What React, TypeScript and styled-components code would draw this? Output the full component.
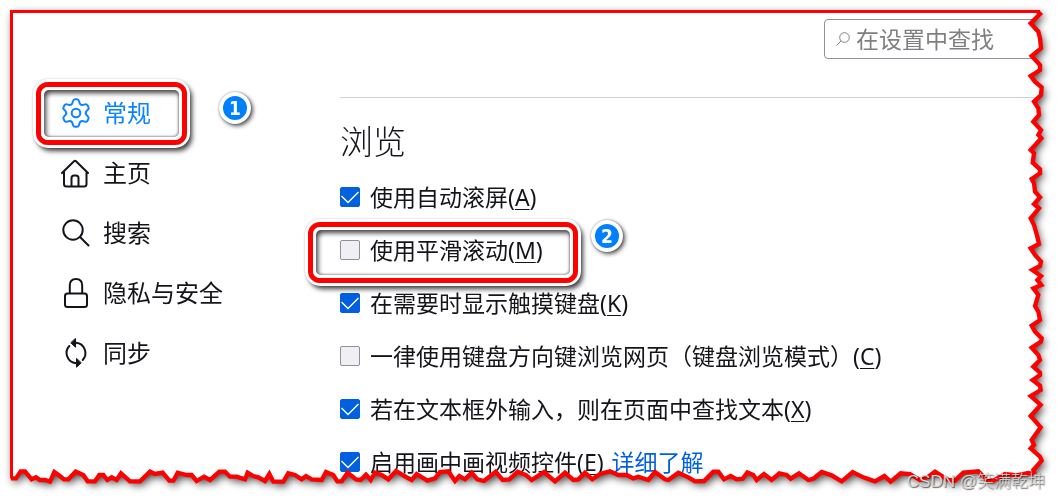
import React from "react";
import styled, { createGlobalStyle, css } from "styled-components";

const GlobalStyle = createGlobalStyle`
  *, *::before, *::after { box-sizing: border-box; }
  body {
    margin: 0;
    background: #fff;
    color: #15141a;
    font-family: "Noto Sans", "Noto Sans CJK SC", sans-serif;
  }
`;

/* Torn paper edges, drawn at three units per pixel.
   The right edge is measured from the right side of the page (x) and its top (y),
   the bottom edge from the left side (x) and the bottom (y). */
const UNIT = 3;

const rightEdge: [number, number][] = [
  [234, 36], [240, 42], [212, 70], [235, 95], [240, 115], [243, 145], [215, 168], [240, 195],
  [240, 210], [212, 228], [225, 245], [245, 262], [243, 285], [222, 305], [235, 325], [237, 345],
  [220, 365], [243, 390], [235, 405], [244, 415], [212, 450], [222, 460], [218, 488], [240, 508],
  [240, 520], [215, 537], [222, 550], [225, 575], [240, 592], [222, 612], [237, 625], [212, 655],
  [222, 675], [232, 710], [237, 732], [212, 745], [225, 765], [243, 785], [240, 798], [217, 810],
  [243, 828], [232, 840], [244, 855], [220, 865], [235, 885], [225, 918], [235, 935], [240, 960],
  [215, 977], [225, 995], [245, 1015], [243, 1025], [215, 1043], [235, 1065], [240, 1080],
  [220, 1100], [240, 1118], [240, 1125], [218, 1140], [240, 1157], [242, 1170], [212, 1188],
  [242, 1215], [212, 1248], [242, 1282], [215, 1320], [222, 1335], [212, 1345], [240, 1370],
  [245, 1382], [220, 1410], [225, 1422],
];

const bottomEdge: [number, number][] = [
  [33, 235], [48, 235], [62, 214], [75, 214], [95, 238], [108, 232], [120, 240], [135, 240],
  [150, 245], [163, 216], [180, 228], [192, 238], [205, 238], [227, 215], [250, 225], [263, 244],
  [285, 244], [298, 225], [310, 225], [322, 240], [335, 232], [350, 240], [363, 220], [390, 244],
  [420, 244], [450, 215], [465, 222], [488, 218], [508, 242], [520, 242], [533, 218], [560, 225],
  [575, 225], [590, 243], [612, 230], [630, 240], [658, 215], [675, 215], [690, 230], [710, 230],
  [735, 238], [743, 218], [760, 228], [775, 232], [795, 243], [808, 222], [820, 245], [850, 245],
  [865, 220], [885, 225], [905, 238], [918, 228], [935, 238], [965, 240], [978, 216], [1000, 225],
  [1012, 244], [1025, 244], [1043, 218], [1068, 238], [1082, 240], [1098, 224], [1112, 240],
  [1125, 218], [1145, 225], [1165, 238], [1188, 213], [1220, 232], [1235, 240], [1250, 222],
  [1282, 242], [1305, 235], [1320, 216], [1345, 214], [1365, 243], [1378, 228], [1395, 238],
  [1415, 218], [1432, 238], [1452, 243], [1487, 215], [1508, 240], [1528, 238], [1553, 215],
  [1578, 225], [1595, 240], [1632, 216], [1665, 244], [1695, 218], [1720, 240], [1735, 238],
  [1755, 218], [1777, 238], [1800, 222], [1830, 214], [1855, 225], [1880, 225], [1900, 235],
  [1915, 230], [1945, 240], [1965, 216], [1995, 238], [2005, 240], [2035, 218], [2065, 232],
  [2085, 244], [2112, 243], [2140, 215], [2155, 215], [2172, 238], [2192, 228], [2210, 238],
  [2228, 236], [2242, 217], [2260, 225], [2270, 240], [2292, 222], [2315, 240], [2338, 220],
  [2360, 225], [2372, 236], [2397, 220], [2425, 240], [2440, 236], [2465, 216], [2495, 226],
  [2525, 244], [2558, 216], [2590, 232], [2625, 244], [2653, 228], [2672, 245], [2702, 220],
  [2730, 222], [2760, 240], [2785, 230], [2805, 215], [2845, 240], [2865, 242], [2890, 218],
  [2935, 214], [2960, 240], [2980, 242], [3015, 222], [3050, 226], [3085, 219], [3100, 222],
];

const toPoints = (edge: [number, number][]) => edge.map((p) => p.join(",")).join(" ");

const tornOutline = [
  "10px 10px",
  "calc(100% - 20px) 10px",
  ...rightEdge
    .slice(1)
    .map(([x, y]) => `calc(100% - ${Math.round(100 - x / UNIT)}px) ${Math.round(y / UNIT)}px`),
  ...[...bottomEdge]
    .reverse()
    .map(([x, y]) => `${Math.round(x / UNIT)}px calc(100% - ${Math.round(100 - y / UNIT)}px)`),
  "10px calc(100% - 21px)",
].join(", ");

const Page = styled.div`
  position: relative;
  overflow: hidden;
`;

const PaperShadow = styled.div`
  filter: drop-shadow(3px 4px 4px rgba(0, 0, 0, 0.75));
`;

const Paper = styled.div`
  display: grid;
  grid-template-columns: 280px minmax(0, 1fr);
  padding: 19px 0 12px 61px;
  background: linear-gradient(#f00, #f00) 10px 10px / 3px 100% no-repeat,
    linear-gradient(#f00, #f00) 10px 10px / 100% 3px no-repeat, #fff;
  clip-path: polygon(${tornOutline});
`;

const edgeLine = css`
  position: absolute;
  pointer-events: none;
  fill: none;
  stroke: #f00;
  stroke-width: 13px;
  stroke-linejoin: miter;
`;

const RightTear = styled.svg`
  ${edgeLine}
  top: 0;
  right: 0;
`;

const BottomTear = styled.svg`
  ${edgeLine}
  left: 0;
  bottom: 0;
`;

const Nav = styled.nav`
  padding-top: 64px;
`;

const NavItem = styled.a<{ $active?: boolean }>`
  position: relative;
  display: flex;
  align-items: center;
  gap: 12px;
  height: 60px;
  color: ${(p) => (p.$active ? "#0a84ff" : "#15141a")};
  font-size: 24px;
  line-height: 32px;
  text-decoration: none;
`;

const NavIcon = styled.svg`
  width: 30px;
  height: 30px;
  fill: none;
  stroke: currentColor;
  stroke-width: 2;
  stroke-linecap: round;
  stroke-linejoin: round;
`;

const Main = styled.main`
  min-width: 0;
  margin-left: -1px;
`;

const SearchBox = styled.label`
  display: flex;
  align-items: center;
  gap: 6px;
  width: 236px;
  height: 40px;
  margin-left: auto;
  padding-left: 11px;
  border: 1px solid #8f8f9d;
  border-radius: 4px;
`;

const SearchIcon = styled.svg`
  flex: none;
  width: 14px;
  height: 14px;
  fill: none;
  stroke: #808080;
`;

const SearchInput = styled.input`
  flex: 1;
  min-width: 0;
  padding: 0;
  border: 0;
  outline: 0;
  background: none;
  font: inherit;
  font-size: 23px;
  line-height: 32px;
  &::placeholder { color: #808080; opacity: 1; }
`;

const Divider = styled.hr`
  height: 1px;
  margin: 38px 0 22px;
  border: 0;
  background: #d0d0d4;
`;

const Heading = styled.h2`
  margin: 0 0 6px;
  font-size: 33px;
  font-weight: 300;
  line-height: 44px;
`;

const OptionRow = styled.div`
  position: relative;
  display: flex;
  align-items: center;
  gap: 8px;
  height: 53px;
  font-size: 23px;
  line-height: 32px;
  white-space: nowrap;
`;

const OptionLabel = styled.label`
  display: flex;
  align-items: center;
  gap: 10px;
`;

const CheckWrap = styled.span`
  display: grid;
  > * { grid-area: 1 / 1; }
`;

const CheckInput = styled.input`
  appearance: none;
  width: 20px;
  height: 20px;
  margin: 0;
  border: 1px solid #8f8f9d;
  border-radius: 2px;
  background: #f0f0f4;
  &:checked { border-color: #0060df; background: #0060df; }
  & + svg { visibility: hidden; }
  &:checked + svg { visibility: visible; }
`;

const CheckMark = styled.svg`
  width: 20px;
  height: 20px;
  fill: none;
  stroke: #fff;
  stroke-width: 1.4;
  pointer-events: none;
`;

const AccessKey = styled.u`
  text-decoration-thickness: 1px;
  text-underline-offset: 3px;
`;

const LearnMore = styled.a`
  color: #0060df;
  text-decoration: none;
`;

const Callout = styled.span<{ $left: number; $top: number; $width: number; $height: number }>`
  position: absolute;
  z-index: 1;
  left: ${(p) => p.$left}px;
  top: ${(p) => p.$top}px;
  width: ${(p) => p.$width}px;
  height: ${(p) => p.$height}px;
  border: 5px solid #f00;
  border-radius: 12px;
  box-shadow: 0 0 0 3px #fff, 0 0 2px 3px rgba(0, 0, 0, 0.25), 3px 4px 5px 2px rgba(0, 0, 0, 0.75);
  pointer-events: none;
  &::before {
    content: "";
    position: absolute;
    inset: 0;
    border: 3px solid #fff;
    border-radius: 7px;
  }
  &::after {
    content: "";
    position: absolute;
    inset: 3px;
    border-radius: 5px;
    box-shadow: inset 2px 3px 5px rgba(0, 0, 0, 0.75), inset -1px -1px 2px rgba(0, 0, 0, 0.3);
  }
`;

const StepBadge = styled.span<{ $left: number; $top: number }>`
  position: absolute;
  z-index: 1;
  left: ${(p) => p.$left}px;
  top: ${(p) => p.$top}px;
  display: grid;
  place-items: center;
  width: 32px;
  height: 32px;
  border: 4px solid #fff;
  border-radius: 50%;
  background: #0080ff;
  color: #fff;
  font-family: "DejaVu Sans Condensed", "DejaVu Sans", sans-serif;
  font-size: 19px;
  font-weight: 700;
  line-height: 24px;
  box-shadow: 0 0 2px rgba(0, 0, 0, 0.4), 2px 2px 4px rgba(0, 0, 0, 0.65);
`;

const Watermark = styled.span`
  position: absolute;
  right: 15px;
  bottom: 5px;
  color: #d4d4d4;
  font-family: "Liberation Sans", "Noto Sans CJK SC", sans-serif;
  font-size: 17px;
  font-weight: 300;
  line-height: 26px;
  text-shadow: 1px 1px 1px rgba(0, 0, 0, 0.6);
  white-space: nowrap;
`;

/* One gear tooth, repeated every 60 degrees round the centre. */
const gearPath = (() => {
  const at = (x: number, y: number, turn: number) => {
    const a = (turn * Math.PI) / 3;
    const rx = x * Math.cos(a) - y * Math.sin(a);
    const ry = x * Math.sin(a) + y * Math.cos(a);
    return `${(rx + 15).toFixed(2)} ${(ry + 15).toFixed(2)}`;
  };
  let d = `M${at(-3.5, -10.3, 0)}`;
  for (let i = 0; i < 6; i++) {
    d += `L${at(-3, -12, i)}Q${at(-2.6, -13.8, i)} ${at(-0.9, -13.8, i)}`;
    d += `L${at(0.9, -13.8, i)}Q${at(2.6, -13.8, i)} ${at(3, -12, i)}`;
    d += `L${at(3.5, -10.3, i)}Q${at(4.33, -7.5, i)} ${at(-3.5, -10.3, i + 1)}`;
  }
  return d + "Z";
})();

const navItems = [
  {
    label: "常规",
    icon: (
      <>
        <path d={gearPath} />
        <circle cx="15" cy="15" r="4.3" />
      </>
    ),
  },
  {
    label: "主页",
    icon: (
      <path d="M1 15 13 3.300Q14 2.300 15 3.300L27 15M3 13.500V26Q3 28.500 5.500 28.500H23Q25.500 28.500 25.500 26V13.500M10.500 28V20Q10.500 17.500 13 17.500H15Q17.500 17.500 17.500 20V28" />
    ),
  },
  {
    label: "搜索",
    icon: (
      <>
        <circle cx="12" cy="12" r="9.700" />
        <path d="M19 19 27.500 27.500" />
      </>
    ),
  },
  {
    label: "隐私与安全",
    icon: (
      <>
        <rect x="4" y="15.500" width="22" height="13.500" rx="2.500" />
        <path d="M8.800 15V7.500Q8.800 1 15 1T21.200 7.500V15" />
      </>
    ),
  },
  {
    label: "同步",
    icon: (
      <>
        <path d="M8.300 8A10.300 10.300 0 0 0 15 25.200M21.700 22A10.300 10.300 0 0 0 15 4.800" />
        <path d="M15.500 20.800V29.200L20 25ZM14.500 .800V9.200L10 5Z" fill="currentColor" stroke="currentColor" strokeWidth="1" />
      </>
    ),
  },
];

const options = [
  { id: "autoscroll", text: "使用自动滚屏", accessKey: "A", checked: true },
  { id: "smooth", text: "使用平滑滚动", accessKey: "M", checked: false, step: true },
  { id: "touch", text: "在需要时显示触摸键盘", accessKey: "K", checked: true },
  { id: "caret", text: "一律使用键盘方向键浏览网页（键盘浏览模式）", accessKey: "C", checked: false },
  { id: "find", text: "若在文本框外输入，则在页面中查找文本", accessKey: "X", checked: true },
  { id: "pip", text: "启用画中画视频控件", accessKey: "E", checked: true, more: true },
];

export default function App() {
  return (
    <Page lang="zh-CN">
      <GlobalStyle />
      <PaperShadow>
        <Paper>
          <Nav aria-label="设置">
            {navItems.map((item, i) => (
              <NavItem key={item.label} href="#" $active={i === 0}>
                <NavIcon viewBox="0 0 30 30" aria-hidden="true">{item.icon}</NavIcon>
                {item.label}
                {i === 0 && (
                  <>
                    <Callout $left={-25} $top={-1} $width={151} $height={63} />
                    <StepBadge $left={158} $top={9}>1</StepBadge>
                  </>
                )}
              </NavItem>
            ))}
          </Nav>
          <Main>
            <SearchBox>
              <SearchIcon viewBox="0 0 14 14" aria-hidden="true">
                <circle cx="8.500" cy="5.500" r="4.800" />
                <path d="M5 9 .500 13.500" />
              </SearchIcon>
              <SearchInput type="text" placeholder="在设置中查找" aria-label="在设置中查找" />
            </SearchBox>
            <Divider />
            <Heading>浏览</Heading>
            {options.map((o) => (
              <OptionRow key={o.id}>
                <OptionLabel htmlFor={o.id}>
                  <CheckWrap>
                    <CheckInput type="checkbox" id={o.id} defaultChecked={o.checked} />
                    <CheckMark viewBox="0 0 20 20" aria-hidden="true">
                      <path d="M1.500 9 8 15.500 18.500 5" />
                    </CheckMark>
                  </CheckWrap>
                  <span>
                    {o.text}(<AccessKey>{o.accessKey}</AccessKey>)
                  </span>
                </OptionLabel>
                {o.more && <LearnMore href="#">详细了解</LearnMore>}
                {o.step && (
                  <>
                    <Callout $left={-32} $top={-1} $width={270} $height={61} />
                    <StepBadge $left={251} $top={-3}>2</StepBadge>
                  </>
                )}
              </OptionRow>
            ))}
          </Main>
        </Paper>
      </PaperShadow>
      <RightTear width="100" height="500" viewBox="0 0 300 1500" aria-hidden="true">
        <polyline points={toPoints(rightEdge)} />
      </RightTear>
      <BottomTear width="1060" height="100" viewBox="0 0 3180 300" aria-hidden="true">
        <polyline points={toPoints(bottomEdge)} />
      </BottomTear>
      <Watermark>CSDN @笑满乾坤</Watermark>
    </Page>
  );
}
